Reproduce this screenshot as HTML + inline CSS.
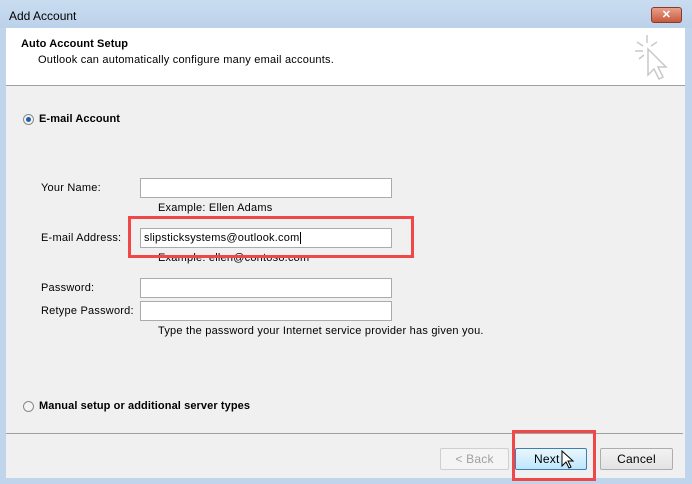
<html><head><style>
body{margin:0;width:692px;height:484px;background:#c0d5ec;position:relative;overflow:hidden;font-family:"Liberation Sans",sans-serif;font-size:11px;color:#000;letter-spacing:0.22px}
.a{position:absolute;white-space:nowrap}
.in{position:absolute;background:#fff;border:1px solid #ababab;box-sizing:border-box;width:252px;height:20px}
.btn{position:absolute;top:448px;height:22px;box-sizing:border-box;border:1px solid #adadad;border-radius:2px;background:linear-gradient(#f2f2f2,#e3e3e3);text-align:center;line-height:20px;font-size:12px}
.rb{position:absolute;width:11px;height:11px;border:1px solid #8a8a8a;border-radius:50%;background:#f4f4f4;box-sizing:border-box}
</style></head><body>
<div class="a" style="left:0;top:0;width:692px;height:28px;background:linear-gradient(#c9dcf0,#bcd2ea)"></div>
<div class="a" style="left:9px;top:9px;font-size:12px;color:#000;letter-spacing:0">Add Account</div>
<div class="a" style="left:651px;top:7px;width:31px;height:16px;border:1px solid #8a3a2a;border-radius:3px;box-sizing:border-box;background:linear-gradient(#e8a08a,#c75a3e);color:#fff;font-weight:bold;text-align:center;line-height:14px;font-size:11px">✕</div>
<div class="a" style="left:6px;top:28px;width:679px;height:450px;background:#f0f0f0"></div>
<div class="a" style="left:6px;top:28px;width:679px;height:57px;background:#fff;border-bottom:1px solid #a0a0a0"></div>
<div class="a" style="left:21px;top:38px;font-weight:bold;font-size:11px;letter-spacing:0.1px">Auto Account Setup</div>
<div class="a" style="left:38px;top:54px">Outlook can automatically configure many email accounts.</div>
<svg class="a" style="left:630px;top:32px" width="42" height="50" viewBox="0 0 42 50"><g stroke="#c8c8c8" stroke-width="1.5" fill="none"><path d="M17 3v8M7 10l6 4M27 10l-6 4M5 19h8M9 27l5-4"/><path d="M18 17v26l6-6 5 10 4-2-5-10h8z" fill="#fff"/></g></svg>
<div class="rb" style="left:23px;top:114px"><div style="margin:2px;width:5px;height:5px;border-radius:50%;background:#1f5fa8"></div></div>
<div class="a" style="left:39px;top:113px;font-weight:bold;letter-spacing:0.1px">E-mail Account</div>
<div class="a" style="left:41px;top:182px">Your Name:</div>
<div class="in" style="left:140px;top:178px"></div>
<div class="a" style="left:158px;top:202px">Example: Ellen Adams</div>
<div class="a" style="left:158px;top:252px">Example: ellen@contoso.com</div>
<div class="a" style="left:41px;top:232px">E-mail Address:</div>
<div class="in" style="left:140px;top:228px;padding:2px 3px;font-size:11px;line-height:14px">slipsticksystems@outlook.com<span style="border-left:1px solid #000;margin-left:1px"></span></div>
<div class="a" style="left:128px;top:216px;width:286px;height:42px;border:3px solid #f04848;box-sizing:border-box"></div>
<div class="a" style="left:41px;top:282px">Password:</div>
<div class="in" style="left:140px;top:278px"></div>
<div class="a" style="left:41px;top:305px">Retype Password:</div>
<div class="in" style="left:140px;top:301px"></div>
<div class="a" style="left:158px;top:325px">Type the password your Internet service provider has given you.</div>
<div class="rb" style="left:23px;top:401px"></div>
<div class="a" style="left:39px;top:400px;font-weight:bold;letter-spacing:0.1px">Manual setup or additional server types</div>
<div class="a" style="left:6px;top:433px;width:677px;height:1px;background:#a0a0a0"></div>
<div class="btn" style="left:440px;width:69px;color:#a0a0a0;border-color:#cfcfcf;background:#f4f4f4">&lt; Back</div>
<div class="btn" style="left:515px;width:72px;border-color:#3c7fb1;background:linear-gradient(#eaf6fd,#bee6fd);text-align:left;padding-left:18px">Next</div>
<svg class="a" style="left:561px;top:450px" width="14" height="20" viewBox="0 0 14 20"><path d="M1 1v15l4-4 3 6 2-1-3-6h5z" fill="#fff" stroke="#000"/></svg>
<div class="btn" style="left:600px;width:73px">Cancel</div>
<div class="a" style="left:512px;top:430px;width:84px;height:51px;border:3px solid #f04848;box-sizing:border-box"></div>
</body></html>
